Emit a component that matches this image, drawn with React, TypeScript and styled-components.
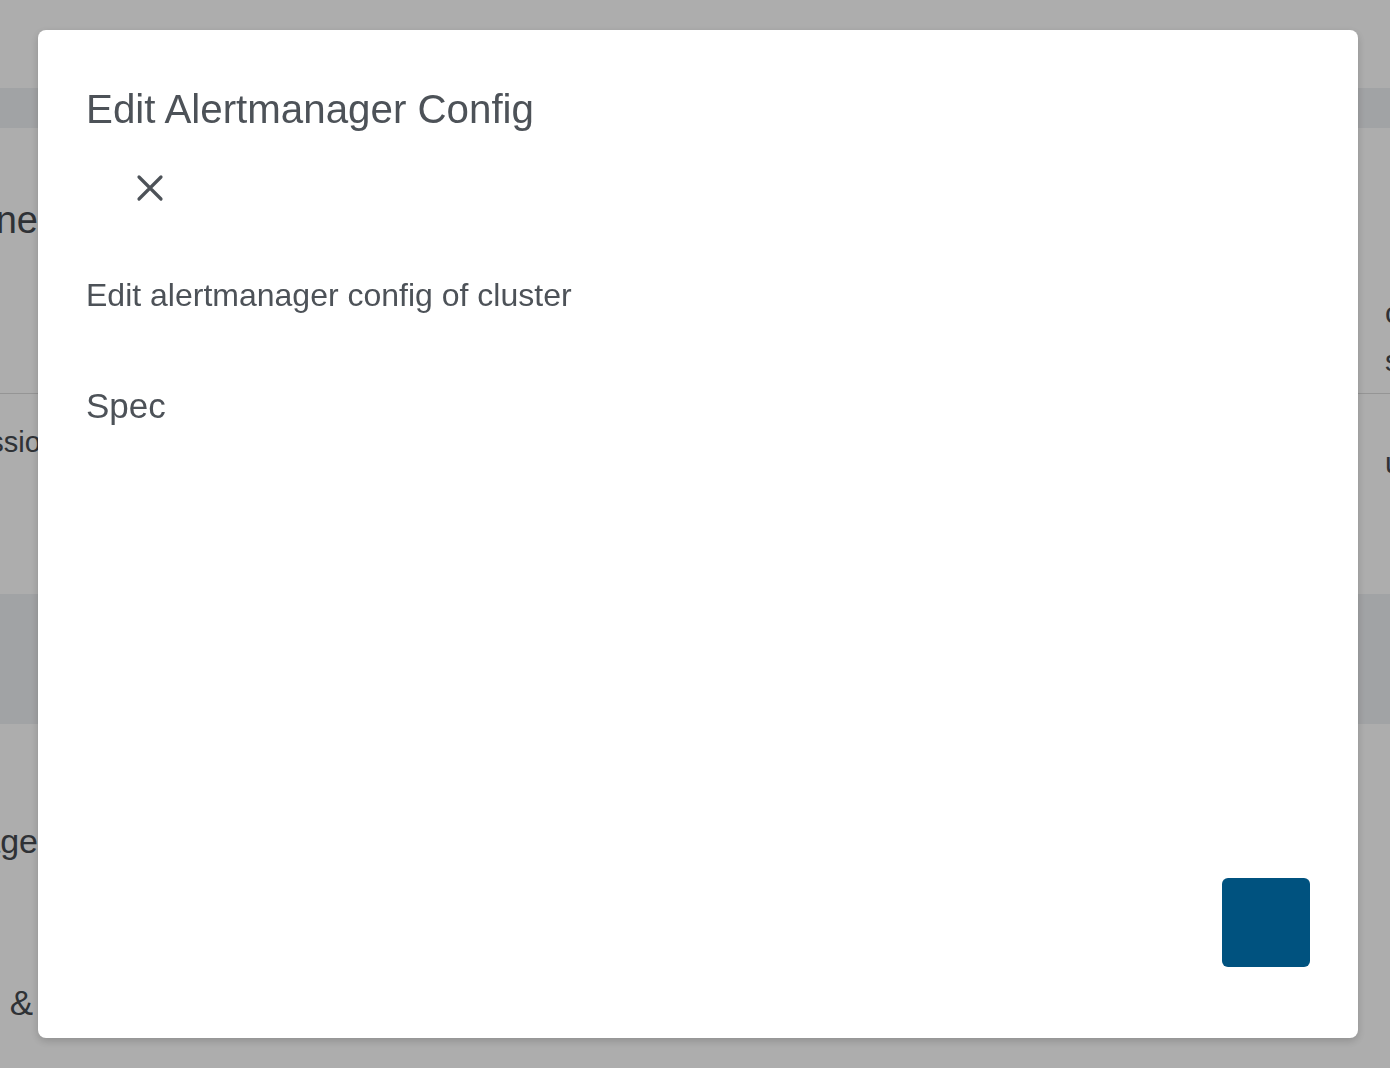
import styled, { createGlobalStyle } from "styled-components";

const GlobalStyle = createGlobalStyle`
  html, body {
    margin: 0;
    padding: 0;
    background: #ffffff;
  }
  body {
    font-family: "Liberation Sans", Arial, Helvetica, sans-serif;
    color: #4d5258;
    overflow: hidden;
  }
`;

type RowProps = { $height: number; $divider?: boolean };
type CellProps = { $width: number; $size: number; $top: number };

export default function App() {
  return (
    <>
      <GlobalStyle />
      <Page>
        <Header />
        <Band $height={40} />
        <Row $height={265} $divider>
          <LeftColumn>
            <LeftCell $width={38} $size={38} $top={70}>
              <span>Machine</span>
            </LeftCell>
          </LeftColumn>
          <RightCell $top={161}>
            <div>cluster</div>
            <div>status</div>
          </RightCell>
        </Row>
        <Row $height={200}>
          <LeftColumn>
            <LeftCell $width={57} $size={29} $top={31}>
              <span>Permission</span>
            </LeftCell>
          </LeftColumn>
          <RightCell $top={45}>
            <div>unknown</div>
          </RightCell>
        </Row>
        <Band $height={130} />
        <Row $height={344}>
          <LeftColumn>
            <LeftCell $width={38} $size={34} $top={97}>
              <span>Storage</span>
            </LeftCell>
            <LeftCell $width={33} $size={35} $top={120}>
              <span>Monitoring &amp;</span>
            </LeftCell>
          </LeftColumn>
        </Row>
      </Page>

      <Backdrop>
        <Modal role="dialog" aria-label="Edit Alertmanager Config">
          <Title>Edit Alertmanager Config</Title>
          <CloseButton aria-label="Close">
            <svg width="28" height="28" viewBox="0 0 28 28" fill="none">
              <path
                d="M3 3 L25 25 M25 3 L3 25"
                stroke="#4d5258"
                strokeWidth="3.2"
                strokeLinecap="round"
              />
            </svg>
          </CloseButton>
          <Description>Edit alertmanager config of cluster</Description>
          <SectionLabel>Spec</SectionLabel>
          <Footer>
            <PrimaryButton aria-label="Save" />
          </Footer>
        </Modal>
      </Backdrop>
    </>
  );
}

/* page behind the dialog */

const Page = styled.div`
  display: flex;
  flex-direction: column;
  height: 100vh;
  background: #ffffff;
`;

const Header = styled.div`
  height: 88px;
  flex-shrink: 0;
  background: #ffffff;
`;

const Band = styled.div<{ $height: number }>`
  height: ${(p) => p.$height}px;
  flex-shrink: 0;
  background: #eef0f3;
`;

const Row = styled.div<RowProps>`
  height: ${(p) => p.$height}px;
  flex-shrink: 0;
  display: flex;
  justify-content: space-between;
  border-bottom: ${(p) => (p.$divider ? "1px solid #dcdcdc" : "none")};
  background: #ffffff;
`;

const LeftColumn = styled.div`
  display: flex;
  flex-direction: column;
`;

const LeftCell = styled.div<CellProps>`
  width: ${(p) => p.$width}px;
  margin-top: ${(p) => p.$top}px;
  display: flex;
  justify-content: flex-end;
  overflow: hidden;
  white-space: nowrap;
  font-size: ${(p) => p.$size}px;
  line-height: 1.2;
  color: #464a50;

  span {
    flex-shrink: 0;
  }
`;

const RightCell = styled.div<{ $top: number }>`
  width: 5px;
  padding-top: ${(p) => p.$top}px;
  overflow: hidden;
  white-space: nowrap;
  font-size: 30px;
  line-height: 48px;
  color: #464a50;
`;

/* dialog */

const Backdrop = styled.div`
  position: fixed;
  inset: 0;
  display: flex;
  padding: 30px 32px 30px 38px;
  background: rgba(0, 0, 0, 0.32);
`;

const Modal = styled.div`
  flex: 1;
  display: flex;
  flex-direction: column;
  align-items: flex-start;
  padding: 56px 48px 71px;
  background: #ffffff;
  border-radius: 8px;
  box-shadow: 0 3px 8px rgba(0, 0, 0, 0.18);
  color: #4d5258;
`;

const Title = styled.h1`
  margin: 0;
  font-size: 40.3px;
  font-weight: 400;
  line-height: 48px;
`;

const CloseButton = styled.button`
  width: 48px;
  height: 48px;
  margin: 30px 0 0 40px;
  padding: 0;
  display: flex;
  align-items: center;
  justify-content: center;
  border: none;
  background: transparent;
  cursor: pointer;
`;

const Description = styled.p`
  margin: 64px 0 0;
  font-size: 32px;
  line-height: 1.2;
`;

const SectionLabel = styled.h2`
  margin: 71px 0 0;
  font-size: 35px;
  font-weight: 400;
  line-height: 1.2;
`;

const Footer = styled.div`
  margin-top: auto;
  align-self: stretch;
  display: flex;
  justify-content: flex-end;
`;

const PrimaryButton = styled.button`
  width: 88px;
  height: 89px;
  border: none;
  border-radius: 6px;
  background: #00527f;
  cursor: pointer;
`;
